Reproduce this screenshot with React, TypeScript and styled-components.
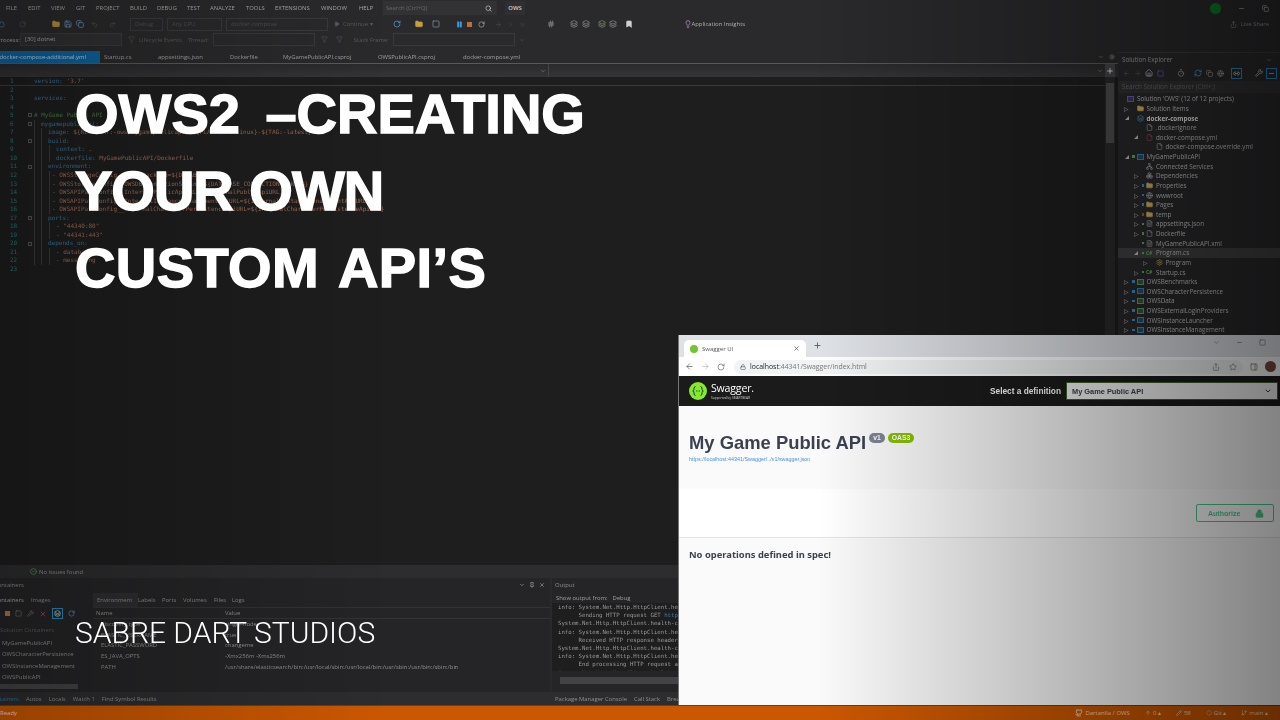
import React from "react";
import styled, { createGlobalStyle } from "styled-components";
import {
  ArrowLeft, ArrowRight, RotateCw, RotateCcw, Lock, Share, Star, PanelRight, X, Plus, Minus, Square, ChevronDown,
  Folder, File, FileText, Globe, Network, Boxes, Settings, Pin, Wrench, RefreshCw, Home, Play, Pause, Save,
  Search, Lightbulb, CheckCircle2, Github, GitBranch, Pencil, ArrowUp, Hash, Bookmark, Filter, Copy, Layers, Diamond,
  Link2, Undo2, Redo2, ChevronsRight, ChevronRight, Timer,
} from "lucide-react";

const GlobalStyle = createGlobalStyle`
  html, body { margin: 0; padding: 0; background: #1e1e1e; }
  * { box-sizing: border-box; }
`;

const Page = styled.div`
  position: relative;
  width: 1280px;
  height: 720px;
  overflow: hidden;
  display: flex;
  flex-direction: column;
  background: #2a2a2c;
  font-family: "Open Sans", "Liberation Sans", sans-serif;
  font-size: 5.9px;
  color: #a8a8a8;
`;

const Ide = styled.div`
  flex: 1;
  display: flex;
  flex-direction: column;
  min-height: 0;
  filter: blur(0.45px);
`;

const MenuBar = styled.div`
  height: 16px;
  display: flex;
  align-items: center;
  padding-left: 6px;
  color: #a8a8a8;
  flex: none;
`;

const MenuItem = styled.span<{ $w: number }>`
  width: ${(p) => p.$w}px;
  flex: none;
`;

const SearchBox = styled.div`
  width: 114px;
  height: 14px;
  margin-left: 5px;
  background: #323234;
  display: flex;
  align-items: center;
  justify-content: space-between;
  padding: 0 5px 0 3px;
  color: #6a6a6a;
`;

const SolutionName = styled.div`
  margin-left: 8px;
  width: 20px;
  height: 14px;
  background: #2f2f31;
  color: #d0d0d0;
  font-weight: 600;
  text-align: center;
  line-height: 14px;
`;

const WindowControls = styled.div`
  margin-left: auto;
  display: flex;
  align-items: center;
  gap: 17px;
  padding-right: 11px;
  color: #bbb;
`;

const UserBadge = styled.span`
  width: 11px;
  height: 11px;
  border-radius: 50%;
  background: #0f7a24;
`;

const ToolRow = styled.div`
  height: 16px;
  flex: none;
  display: flex;
  align-items: center;
  color: #565656;
`;

const ToolSlot = styled.div<{ $x?: number; $c?: string; $end?: boolean }>`
  margin-left: ${(p) => (p.$end ? "auto" : `${p.$x || 0}px`)};
  color: ${(p) => p.$c || "#5a5a5a"};
  display: flex;
  align-items: center;
  flex: none;
`;

const LastSlot = styled(ToolSlot)`
  margin-right: 11px;
`;

const ToolField = styled.div<{ $x: number; $w: number }>`
  margin-left: ${(p) => p.$x}px;
  width: ${(p) => p.$w}px;
  height: 13px;
  flex: none;
  border: 1px solid #3a3a3c;
  padding-left: 4px;
  line-height: 11px;
  color: #505050;
`;

const ProcessRow = styled(ToolRow)`
  height: 15px;
`;

const ProcessLabel = styled.span`
  margin-left: -3px;
  width: 23px;
  flex: none;
  color: #a8a8a8;
`;

const ProcessField = styled(ToolField)`
  color: #a8a8a8;
  background: #303032;
`;

const Workspace = styled.div`
  flex: 1;
  min-height: 0;
  display: flex;
`;

const EditorColumn = styled.div`
  width: 1118px;
  flex: none;
  display: flex;
  flex-direction: column;
`;

const TabStrip = styled.div`
  height: 17px;
  flex: none;
  padding-top: 4px;
  display: flex;
  align-items: stretch;
  border-bottom: 1px solid #1f6a9c;
  color: #a0a0a0;
`;

const ActiveTab = styled.div`
  width: 100px;
  flex: none;
  background: #0e639c;
  color: #b7d6ea;
  display: flex;
  justify-content: flex-end;
  align-items: center;
  gap: 6px;
  padding-right: 2px;
  white-space: nowrap;
  overflow: hidden;
`;

const DocTab = styled.div<{ $w: number }>`
  width: ${(p) => p.$w}px;
  flex: none;
  display: flex;
  align-items: center;
  white-space: nowrap;
`;

const TabExtras = styled.div`
  flex: 1;
  display: flex;
  justify-content: flex-end;
  align-items: center;
  gap: 5px;
  padding-right: 3px;
  color: #999;
`;

const NavBar = styled.div`
  height: 13px;
  flex: none;
  background: linear-gradient(#2a2a2c, #353537);
  display: flex;
  align-items: center;
  padding: 0 3px 0 540px;
  color: #999;
`;

const NavDivider = styled.div`
  width: 1px;
  height: 100%;
  margin-left: 2px;
  margin-right: auto;
  background: #444;
`;

const NavPlus = styled.span`
  display: flex;
  width: 10px;
  height: 100%;
  margin-left: 2px;
  align-items: center;
  justify-content: center;
  background: #47474a;
  color: #ddd;
`;

const EditorBody = styled.div`
  flex: 1;
  min-height: 0;
  display: flex;
  padding-right: 3px;
  background: #1e1e1e;
`;

const CodeArea = styled.div`
  flex: 1;
  font-family: "DejaVu Sans Mono", monospace;
  font-size: 6px;
  line-height: 8.55px;
  filter: brightness(1.15);
`;

const CodeLine = styled.div<{ $current?: boolean }>`
  height: 8.55px;
  display: flex;
  white-space: pre;
  border-bottom: ${(p) => (p.$current ? "1px solid #343436" : "none")};
`;

const LineNumber = styled.span`
  width: 28px;
  padding-left: 10px;
  flex: none;
  color: #1f6a6a;
`;

const FoldCell = styled.span`
  width: 6px;
  flex: none;
  display: flex;
  align-items: center;
`;

const FoldBox = styled.span`
  width: 4px;
  height: 4px;
  border: 1px solid #4a4a4a;
`;

const CodeText = styled.span<{ $indent: number }>`
  padding-left: ${(p) => p.$indent}px;
  color: #2f6384;
  background-image: repeating-linear-gradient(90deg, #333 0 1px, transparent 1px 7.3px);
  background-size: ${(p) => p.$indent}px 100%;
  background-repeat: no-repeat;
`;

const Str = styled.span`
  color: #8a5c48;
`;

const Comment = styled.span`
  color: #3f6b3a;
`;

const ScrollRail = styled.div`
  width: 10px;
  flex: none;
  background: #2a2a2c;
  display: flex;
  justify-content: center;
  padding-top: 6px;
`;

const ScrollThumb = styled.div`
  width: 8px;
  height: 60px;
  background: #4e4e50;
`;

const SolutionPanel = styled.div`
  flex: 1;
  display: flex;
  flex-direction: column;
  padding-top: 5px;
  min-width: 0;
  overflow: hidden;
  background: #2a2a2c;
  font-size: 6.3px;
  color: #c0c0c0;
`;

const PanelTitle = styled.div`
  height: 14px;
  flex: none;
  display: flex;
  align-items: center;
  justify-content: space-between;
  padding: 0 8px 0 4px;
  color: #a0a0a0;
  border-top: 1px solid #3a3a3a;
`;

const ExplorerTools = styled.div`
  height: 14px;
  flex: none;
  display: flex;
  align-items: center;
  padding-left: 5px;
`;

const ActiveTool = styled.span`
  display: inline-flex;
  padding: 1px;
  border: 1px solid #2a88c0;
  color: #cfe;
`;

const ExplorerSearch = styled.div`
  height: 12px;
  flex: none;
  margin-top: 1px;
  padding-left: 4px;
  line-height: 12px;
  color: #6a6a6a;
  background: #323234;
`;

const Tree = styled.div`
  padding-top: 1px;
`;

const TreeRow = styled.div<{ $depth: number; $selected?: boolean; $bold?: boolean }>`
  height: 9.63px;
  display: flex;
  align-items: center;
  padding-left: ${(p) => p.$depth * 9.5}px;
  white-space: nowrap;
  color: ${(p) => (p.$bold ? "#e8e8e8" : "#c0c0c0")};
  font-weight: ${(p) => (p.$bold ? 700 : 400)};
  background: ${(p) => (p.$selected ? "#414143" : "transparent")};
`;

const TreeCaret = styled.span`
  width: 8px;
  margin-left: -5px;
  flex: none;
  display: flex;
  justify-content: center;
  color: #c0c0c0;
`;

const TreeDot = styled.span`
  width: 6px;
  flex: none;
  display: flex;
  justify-content: center;
`;

const Dot = styled.span<{ $c: string }>`
  width: 2.5px;
  height: 2.5px;
  background: ${(p) => p.$c};
`;

const TreeIcon = styled.span`
  width: 7px;
  margin-right: 3px;
  flex: none;
  display: flex;
  align-items: center;
`;

const CsharpMark = styled.span`
  font-size: 5px;
  font-weight: 700;
  letter-spacing: -0.3px;
  color: #6fb05a;
`;

const OpenArrow = styled.span`
  width: 0;
  height: 0;
  border-left: 4px solid transparent;
  border-bottom: 4px solid #c0c0c0;
`;

const Swatch = styled.span<{ $c: string }>`
  width: 7px;
  height: 6px;
  flex: none;
  border: 1px solid ${(p) => p.$c};
  background: ${(p) => p.$c}55;
`;

const BottomArea = styled.div`
  height: 140px;
  flex: none;
  display: flex;
  flex-direction: column;
`;

const IssueBar = styled.div`
  height: 13px;
  flex: none;
  display: flex;
  align-items: center;
  gap: 2px;
  padding-left: 30px;
  background: #2d2d2f;
  color: #8f8f8f;
`;

const PanelsRow = styled.div`
  flex: 1;
  display: flex;
  gap: 2px;
  min-height: 0;
`;

const ContainersPanel = styled.div`
  width: 550px;
  flex: none;
  display: flex;
  flex-direction: column;
  background: #252527;
`;

const OutputPanel = styled.div`
  flex: 1;
  display: flex;
  flex-direction: column;
  background: #252527;
`;

const PanelHead = styled.div`
  height: 14px;
  flex: none;
  display: flex;
  align-items: center;
  padding-right: 5px;
  color: #8f8f8f;
  white-space: nowrap;
`;

const ClippedLabel = styled.span`
  margin-left: -6px;
  flex: 1;
`;

const OutputLabel = styled.span`
  margin-left: 3px;
`;

const HeadActions = styled.span`
  display: flex;
  gap: 4px;
  color: #bbb;
`;

const ContainersBody = styled.div`
  flex: 1;
  display: flex;
  min-height: 0;
`;

const ContainerList = styled.div`
  width: 78px;
  flex: none;
  display: flex;
  flex-direction: column;
  margin-right: 15px;
`;

const ListTabs = styled.div`
  height: 14px;
  margin-top: 1px;
  display: flex;
  gap: 7px;
  align-items: center;
`;

const ListTab = styled.span<{ $clip?: boolean }>`
  margin-left: ${(p) => (p.$clip ? "-6px" : "0")};
  color: ${(p) => (p.$clip ? "#a8a8a8" : "#8a8a8a")};
`;

const ListTools = styled.div`
  height: 13px;
  display: flex;
  align-items: center;
  gap: 5px;
  padding-left: 5px;
  color: #777;
`;

const Stop = styled.span`
  width: 5px;
  height: 5px;
  background: #b96f43;
`;

const ListGroup = styled.div`
  height: 13px;
  margin-top: 5px;
  line-height: 11px;
  color: #5a5a5a;
`;

const ListItem = styled.div`
  height: 11.4px;
  line-height: 11.4px;
  padding-left: 2px;
  color: #8f8f8f;
  white-space: nowrap;
`;

const HScroll = styled.div`
  margin-top: auto;
  height: 5px;
  margin-bottom: 3px;
  background: #434345;
`;

const Details = styled.div`
  flex: 1;
  display: flex;
  flex-direction: column;
  min-width: 0;
`;

const DetailTabs = styled.div`
  height: 14px;
  margin-top: 1px;
  display: flex;
  align-items: center;
  color: #8a8a8a;
`;

const DetailTab = styled.span<{ $on?: boolean; $w: number }>`
  width: ${(p) => p.$w}px;
  height: 100%;
  padding-left: ${(p) => (p.$on ? "4px" : "0")};
  line-height: 14px;
  background: ${(p) => (p.$on ? "#2e2e30" : "transparent")};
`;

const EnvRow = styled.div<{ $head?: boolean }>`
  height: ${(p) => (p.$head ? "12px" : "10.6px")};
  display: grid;
  grid-template-columns: 132px 1fr;
  align-items: center;
  white-space: nowrap;
  color: #929292;
  border-top: ${(p) => (p.$head ? "1px solid #333" : "none")};
  border-bottom: ${(p) => (p.$head ? "1px solid #333" : "none")};
`;

const EnvName = styled.span<{ $head?: boolean }>`
  padding-left: ${(p) => (p.$head ? "3px" : "8px")};
`;

const OutputFilter = styled.div`
  height: 11px;
  flex: none;
  display: flex;
  gap: 5px;
  align-items: center;
  padding-left: 4px;
  color: #a0a0a0;
  white-space: nowrap;
`;

const OutputText = styled.div`
  flex: 1;
  padding: 0 0 0 6px;
  overflow: hidden;
  font-family: "DejaVu Sans Mono", monospace;
  font-size: 5.7px;
  line-height: 8.2px;
  white-space: pre;
  color: #9a9a9a;
  background: #1e1e1e;
`;

const OutputLink = styled.span`
  color: #3f7fb0;
`;

const OutputScroll = styled.div`
  height: 7px;
  flex: none;
  margin: 6px 0 8px 8px;
  background: #434345;
`;

const PanelFooter = styled.div`
  height: 13px;
  flex: none;
  display: flex;
  align-items: center;
  background: #2d2d2f;
  color: #8f8f8f;
  white-space: nowrap;
  overflow: hidden;
`;

const FooterGroup = styled.div<{ $w?: number }>`
  width: ${(p) => (p.$w ? `${p.$w}px` : "auto")};
  display: flex;
  gap: 7px;
  flex: none;
`;

const FooterClip = styled.span`
  margin-left: -11px;
  color: #2a7ba8;
`;

const StatusBar = styled.div`
  height: 15px;
  flex: none;
  background: #ca5800;
  border-top: 1px solid #7a3a0a;
  display: flex;
  align-items: center;
  justify-content: space-between;
  padding: 0 12px 0 0;
  font-size: 6px;
  color: #f3d9c3;
`;

const StatusGroup = styled.div`
  display: flex;
  align-items: center;
  gap: 15px;
`;

const StatusItem = styled.span`
  display: inline-flex;
  align-items: center;
  gap: 2px;
`;

/* floating browser window */
const Browser = styled.div`
  position: absolute;
  left: 678px;
  top: 335px;
  width: 602px;
  height: 370px;
  display: flex;
  flex-direction: column;
  background: #fafafa;
  border-left: 1px solid #777;
  font-family: "Liberation Sans", sans-serif;
  filter: blur(0.35px);
`;

const ChromeTabs = styled.div`
  height: 22px;
  flex: none;
  display: flex;
  align-items: flex-end;
  padding-left: 5px;
  background: #dee1e6;
`;

const ChromeTab = styled.div`
  width: 122px;
  height: 17px;
  background: #fff;
  border-radius: 5px 5px 0 0;
  display: flex;
  align-items: center;
  padding: 0 6px;
  gap: 4px;
  font-family: "Open Sans", sans-serif;
  font-size: 6px;
  color: #555;
`;

const Favicon = styled.span`
  width: 8px;
  height: 8px;
  border-radius: 50%;
  background: #74c42f;
  flex: none;
`;

const TabTitle = styled.span`
  flex: 1;
`;

const NewTab = styled.span`
  margin: 0 0 2px 7px;
  color: #444;
  display: flex;
  align-self: center;
`;

const WindowButtons = styled.div`
  margin-left: auto;
  align-self: flex-start;
  padding-top: 4px;
  display: flex;
  gap: 16px;
  padding-right: 14px;
  color: #666;
`;

const AddressBar = styled.div`
  height: 19px;
  flex: none;
  display: flex;
  align-items: center;
  gap: 7px;
  padding: 0 4px 0 6px;
  background: #fff;
  color: #666;
`;

const Omnibox = styled.div`
  flex: 1;
  height: 14px;
  margin-left: 2px;
  border-radius: 7px;
  background: #f1f3f4;
  display: flex;
  align-items: center;
  gap: 4px;
  padding: 0 6px;
  font-family: "Open Sans", sans-serif;
  font-size: 6.9px;
  color: #777;
`;

const Host = styled.span`
  color: #222;
`;

const OmniEnd = styled.span`
  margin-left: auto;
  display: flex;
  gap: 9px;
`;

const Avatar = styled.span`
  width: 11px;
  height: 11px;
  border-radius: 50%;
  background: #7b4a3c;
`;

const SwaggerBar = styled.div`
  height: 30px;
  flex: none;
  background: #1b1b1b;
  display: flex;
  align-items: center;
  padding: 0 2px 0 10px;
  color: #fff;
`;

const Brand = styled.div`
  display: flex;
  flex-direction: column;
  margin-left: 4px;
  font-family: "Open Sans", sans-serif;
`;

const BrandName = styled.span`
  font-size: 10.6px;
  line-height: 14px;
  letter-spacing: -0.2px;
`;

const BrandSub = styled.span`
  margin-top: 1px;
  font-size: 3.2px;
  line-height: 5px;
  color: #ccc;
`;

const DefinitionLabel = styled.span`
  margin-left: auto;
  font-size: 8.3px;
  font-weight: 700;
  margin-right: 5px;
`;

const DefinitionSelect = styled.div`
  width: 212px;
  height: 18px;
  border: 1.5px solid #41622c;
  background: #f7f7f7;
  display: flex;
  align-items: center;
  justify-content: space-between;
  padding: 0 5px;
  font-size: 7.4px;
  font-weight: 700;
  color: #3b4151;
`;

const InfoBlock = styled.div`
  height: 83px;
  flex: none;
  padding: 26px 0 0 10px;
  background: #fafafa;
`;

const TitleRow = styled.div`
  display: flex;
  align-items: flex-start;
`;

const ApiTitle = styled.h2`
  margin: 0;
  font-size: 18.4px;
  line-height: 22px;
  font-weight: 700;
  color: #3b4151;
`;

const Badge = styled.span<{ $c: string }>`
  margin: 1px 0 0 3px;
  padding: 0 4px;
  height: 10px;
  line-height: 10px;
  border-radius: 5px;
  background: ${(p) => p.$c};
  color: #fff;
  font-size: 6.8px;
  font-weight: 700;
`;

const SpecLink = styled.div`
  font-size: 5.4px;
  color: #4990e2;
  margin-top: 2px;
`;

const AuthBand = styled.div`
  height: 49px;
  flex: none;
  background: #fff;
  border-bottom: 1px solid #e4e4e4;
  display: flex;
  align-items: center;
  justify-content: flex-end;
  padding: 0 6px 0 0;
`;

const AuthButton = styled.div`
  width: 78px;
  height: 18px;
  border: 1.5px solid #49cc90;
  border-radius: 2px;
  display: flex;
  align-items: center;
  justify-content: space-between;
  padding: 0 9px 0 11px;
  color: #49cc90;
  font-size: 7px;
  font-weight: 700;
`;

const EmptyNote = styled.div`
  padding: 10px 0 0 10px;
  font-family: "Noto Sans", sans-serif;
  font-size: 9.4px;
  font-weight: 700;
  color: #3b4151;
`;

const Vignette = styled.div`
  position: absolute;
  inset: 0;
  pointer-events: none;
  background: linear-gradient(90deg, rgba(0, 0, 0, 0.25) 0, rgba(0, 0, 0, 0) 30%, rgba(0, 0, 0, 0) 64%, rgba(0, 0, 0, 0.48) 100%);
`;

const Headline = styled.h1`
  position: absolute;
  left: 75px;
  top: 75px;
  margin: 0;
  font-family: "Liberation Sans", sans-serif;
  font-size: 56px;
  line-height: 77px;
  font-weight: 700;
  color: #fff;
  -webkit-text-stroke: 1.4px #fff;
`;

const HeadLine = styled.span<{ $gap: number; $track?: number }>`
  display: block;
  white-space: pre;
  word-spacing: ${(p) => p.$gap}px;
  letter-spacing: ${(p) => p.$track || 0}px;
`;

const Studio = styled.div`
  position: absolute;
  left: 75px;
  top: 615px;
  font-family: "Roboto", "Liberation Sans", sans-serif;
  font-size: 30px;
  font-weight: 300;
  line-height: 36px;
  color: #fff;
  white-space: nowrap;
`;

const menu: [string, number][] = [
  ["FILE", 22], ["EDIT", 23], ["VIEW", 25], ["GIT", 20], ["PROJECT", 34], ["BUILD", 27], ["DEBUG", 30],
  ["TEST", 23], ["ANALYZE", 36], ["TOOLS", 29], ["EXTENSIONS", 46], ["WINDOW", 38], ["HELP", 19],
];

const tabs: [string, number][] = [
  ["Startup.cs", 54], ["appsettings.json", 72], ["Dockerfile", 53], ["MyGamePublicAPI.csproj", 95],
  ["OWSPublicAPI.csproj", 85], ["docker-compose.yml", 90],
];

type Code = { n: number; i?: number; t?: React.ReactNode; current?: boolean; fold?: boolean };
const code: Code[] = [
  { n: 1, t: <>version: <Str>'3.7'</Str></>, current: true },
  { n: 2 },
  { n: 3, t: "services:" },
  { n: 4 },
  { n: 5, t: <Comment># MyGame Public API</Comment>, fold: true },
  { n: 6, i: 7, t: "mygamepublicapi:", fold: true },
  { n: 7, i: 14, t: <>image: <Str>{"${REGISTRY:-ows/mygamepublicapi}:${PLATFORM:-linux}-${TAG:-latest}"}</Str></> },
  { n: 8, i: 14, t: "build:", fold: true },
  { n: 9, i: 22, t: <>context: <Str>.</Str></> },
  { n: 10, i: 22, t: <>dockerfile: <Str>MyGamePublicAPI/Dockerfile</Str></> },
  { n: 11, i: 14, t: "environment:", fold: true },
  { n: 12, i: 18, t: <Str>{"- OWSStorageConfig__OWSDBBackend=${DATABASE}"}</Str> },
  { n: 13, i: 18, t: <Str>{"- OWSStorageConfig__OWSDBConnectionString=${DATABASE_CONNECTION_STRING}"}</Str> },
  { n: 14, i: 18, t: <Str>{"- OWSAPIPathConfig__InternalPublicApiURL=${InternalPublicApiURL}"}</Str> },
  { n: 15, i: 18, t: <Str>{"- OWSAPIPathConfig__InternalInstanceManagementApiURL=${InternalInstanceManagementApiURL}"}</Str> },
  { n: 16, i: 18, t: <Str>{"- OWSAPIPathConfig__InternalCharacterPersistenceApiURL=${InternalCharacterPersistenceApiURL}"}</Str> },
  { n: 17, i: 14, t: "ports:", fold: true },
  { n: 18, i: 22, t: <Str>- "44340:80"</Str> },
  { n: 19, i: 22, t: <Str>- "44341:443"</Str> },
  { n: 20, i: 14, t: "depends_on:", fold: true },
  { n: 21, i: 22, t: <Str>- database</Str> },
  { n: 22, i: 22, t: <Str>- messaging</Str> },
  { n: 23 },
];

type Node = {
  d: number;
  label: string;
  caret?: "open" | "closed";
  dot?: string;
  icon: React.ReactNode;
  bold?: boolean;
  sel?: boolean;
};
const BLUE = "#3f8fd0";
const GREEN = "#5fae5f";
const RED = "#c0503a";
const folder = <Folder size={7} color="#d6b464" fill="#d6b464" />;
const fileIcon = <File size={7} color="#b0b0b0" />;
const textIcon = <FileText size={7} color="#b0b0b0" />;
const csIcon = <CsharpMark>C#</CsharpMark>;
const blueBox = <Swatch $c="#2f8fc8" />;
const greenBox = <Swatch $c="#5aa35a" />;
const tree: Node[] = [
  { d: 0, label: "Solution 'OWS' (12 of 12 projects)", icon: <Swatch $c="#6a5acd" /> },
  { d: 1, label: "Solution Items", caret: "closed", icon: folder },
  { d: 1, label: "docker-compose", caret: "open", icon: <Layers size={7} color="#5aa6d6" />, bold: true },
  { d: 2, label: ".dockerignore", icon: fileIcon },
  { d: 2, label: "docker-compose.yml", caret: "open", icon: <File size={7} color="#b0505f" /> },
  { d: 3, label: "docker-compose.override.yml", icon: fileIcon },
  { d: 1, label: "MyGamePublicAPI", caret: "open", dot: GREEN, icon: blueBox },
  { d: 2, label: "Connected Services", icon: <Network size={7} color="#b0b0b0" /> },
  { d: 2, label: "Dependencies", caret: "closed", icon: <Boxes size={7} color="#b0b0b0" /> },
  { d: 2, label: "Properties", caret: "closed", dot: BLUE, icon: folder },
  { d: 2, label: "wwwroot", caret: "closed", dot: BLUE, icon: <Globe size={7} color="#c0c0c0" /> },
  { d: 2, label: "Pages", caret: "closed", dot: BLUE, icon: folder },
  { d: 2, label: "temp", caret: "closed", dot: RED, icon: folder },
  { d: 2, label: "appsettings.json", caret: "closed", dot: GREEN, icon: textIcon },
  { d: 2, label: "Dockerfile", caret: "closed", dot: GREEN, icon: fileIcon },
  { d: 2, label: "MyGamePublicAPI.xml", dot: GREEN, icon: textIcon },
  { d: 2, label: "Program.cs", caret: "open", dot: GREEN, icon: csIcon, sel: true },
  { d: 3, label: "Program", caret: "closed", icon: <Settings size={7} color="#d6b464" /> },
  { d: 2, label: "Startup.cs", caret: "closed", dot: GREEN, icon: csIcon },
  { d: 1, label: "OWSBenchmarks", caret: "closed", dot: BLUE, icon: greenBox },
  { d: 1, label: "OWSCharacterPersistence", caret: "closed", dot: BLUE, icon: blueBox },
  { d: 1, label: "OWSData", caret: "closed", dot: BLUE, icon: greenBox },
  { d: 1, label: "OWSExternalLoginProviders", caret: "closed", dot: BLUE, icon: greenBox },
  { d: 1, label: "OWSInstanceLauncher", caret: "closed", dot: BLUE, icon: blueBox },
  { d: 1, label: "OWSInstanceManagement", caret: "closed", dot: BLUE, icon: blueBox },
];

const env: [string, string][] = [
  ["discovery.type", "single-node"],
  ["ELASTIC_USERNAME", "true"],
  ["ELASTIC_PASSWORD", "changeme"],
  ["ES_JAVA_OPTS", "-Xmx256m -Xms256m"],
  ["PATH", "/usr/share/elasticsearch/bin:/usr/local/sbin:/usr/local/bin:/usr/sbin:/usr/bin:/sbin:/bin"],
];

const detailTabs: [string, number][] = [
  ["Environment", 45], ["Labels", 24], ["Ports", 21], ["Volumes", 31], ["Files", 18], ["Logs", 20],
];

export default function App() {
  return (
    <Page>
      <GlobalStyle />
      <Ide>
        <MenuBar>
          {menu.map(([label, w]) => (
            <MenuItem key={label} $w={w}>{label}</MenuItem>
          ))}
          <SearchBox>
            Search (Ctrl+Q)
            <Search size={7} color="#ddd" />
          </SearchBox>
          <SolutionName>OWS</SolutionName>
          <WindowControls>
            <UserBadge />
            <Minus size={7} />
            <Copy size={7} />
          </WindowControls>
        </MenuBar>
        <ToolRow>
          <ToolSlot $x={-2} $c="#3f8fc8"><RotateCcw size={7} /></ToolSlot>
          <ToolSlot $x={14}><RotateCw size={7} /></ToolSlot>
          <ToolSlot $x={26} $c="#b88f3c"><Folder size={8} fill="#b88f3c" /></ToolSlot>
          <ToolSlot $x={4} $c="#6f9fc8"><Save size={8} /></ToolSlot>
          <ToolSlot $x={4} $c="#6f9fc8"><Copy size={8} /></ToolSlot>
          <ToolSlot $x={7}><Undo2 size={7} /></ToolSlot>
          <ToolSlot $x={11}><Redo2 size={7} /></ToolSlot>
          <ToolField $x={14} $w={33}>Debug</ToolField>
          <ToolField $x={4} $w={55}>Any CPU</ToolField>
          <ToolField $x={4} $w={102}>docker-compose</ToolField>
          <ToolSlot $x={6}><Play size={6} fill="currentColor" /></ToolSlot>
          <ToolSlot $x={3}>Continue ▾</ToolSlot>
          <ToolSlot $x={20} $c="#5aa3dc"><RotateCw size={8} /></ToolSlot>
          <ToolSlot $x={14} $c="#c89f3c"><Folder size={8} fill="#c89f3c" /></ToolSlot>
          <ToolSlot $x={9} $c="#8a9aaa"><Square size={8} /></ToolSlot>
          <ToolSlot $x={16} $c="#3f9fe8"><Pause size={7} fill="#3f9fe8" /></ToolSlot>
          <ToolSlot $x={4}><Stop /></ToolSlot>
          <ToolSlot $x={6} $c="#c0c0c0"><RotateCw size={7} /></ToolSlot>
          <ToolSlot $x={10} $c="#4a4a4a"><ArrowRight size={7} /></ToolSlot>
          <ToolSlot $x={5} $c="#4a4a4a"><ChevronRight size={7} /></ToolSlot>
          <ToolSlot $x={5} $c="#4a4a4a"><ChevronsRight size={7} /></ToolSlot>
          <ToolSlot $x={21} $c="#a0a0a0"><Hash size={8} /></ToolSlot>
          <ToolSlot $x={15} $c="#9a9a9a"><Layers size={8} /></ToolSlot>
          <ToolSlot $x={4} $c="#9a9a9a"><Layers size={8} /></ToolSlot>
          <ToolSlot $x={8} $c="#8a9a7a"><Layers size={8} /></ToolSlot>
          <ToolSlot $x={3} $c="#9a9a9a"><Layers size={8} /></ToolSlot>
          <ToolSlot $x={8} $c="#d0d0d0"><Bookmark size={8} fill="#d0d0d0" /></ToolSlot>
          <ToolSlot $x={51} $c="#c99ae8"><Lightbulb size={8} /></ToolSlot>
          <ToolSlot $c="#b0b0b0">Application Insights</ToolSlot>
          <ToolSlot $end $c="#8a8a8a"><Share size={7} /></ToolSlot>
          <LastSlot $x={4} $c="#8a8a8a">Live Share</LastSlot>
        </ToolRow>
        <ProcessRow>
          <ProcessLabel>Process:</ProcessLabel>
          <ProcessField $x={0} $w={102}>[30] dotnet</ProcessField>
          <ToolSlot $x={6}><Filter size={7} /></ToolSlot>
          <ToolSlot $x={4}>Lifecycle Events</ToolSlot>
          <ToolSlot $x={6}>Thread:</ToolSlot>
          <ToolField $x={4} $w={102}> </ToolField>
          <ToolSlot $x={6}><Filter size={7} /></ToolSlot>
          <ToolSlot $x={8}><Filter size={7} /></ToolSlot>
          <ToolSlot $x={11}>Stack Frame:</ToolSlot>
          <ToolField $x={4} $w={122}> </ToolField>
          <ToolSlot $x={4}><ChevronDown size={6} /></ToolSlot>
        </ProcessRow>
        <Workspace>
          <EditorColumn>
            <TabStrip>
              <ActiveTab>
                docker-compose-additional.yml
                <Pin size={5} />
                <X size={6} />
              </ActiveTab>
              <DocTab $w={4} />
              {tabs.map(([label, w]) => (
                <DocTab key={label} $w={w}>{label}</DocTab>
              ))}
              <TabExtras>
                <ChevronDown size={6} />
                <Settings size={6} />
              </TabExtras>
            </TabStrip>
            <NavBar>
              <ChevronDown size={6} />
              <NavDivider />
              <ChevronDown size={6} />
              <NavPlus><Plus size={8} strokeWidth={3} /></NavPlus>
            </NavBar>
            <EditorBody>
              <CodeArea>
                {code.map((l) => (
                  <CodeLine key={l.n} $current={l.current}>
                    <LineNumber>{l.n}</LineNumber>
                    <FoldCell>{l.fold && <FoldBox />}</FoldCell>
                    <CodeText $indent={l.i || 0}>{l.t}</CodeText>
                  </CodeLine>
                ))}
              </CodeArea>
              <ScrollRail><ScrollThumb /></ScrollRail>
            </EditorBody>
          </EditorColumn>
          <SolutionPanel>
            <PanelTitle>Solution Explorer<ChevronDown size={6} /></PanelTitle>
            <ExplorerTools>
              <ToolSlot $c="#5a5a5a"><ArrowLeft size={7} /></ToolSlot>
              <ToolSlot $x={4} $c="#5a5a5a"><ArrowRight size={7} /></ToolSlot>
              <ToolSlot $x={4} $c="#c8c8c8"><Home size={8} /></ToolSlot>
              <ToolSlot $x={4} $c="#7a6add"><Square size={7} /></ToolSlot>
              <ToolSlot $x={13} $c="#a8a8a8"><Timer size={8} /></ToolSlot>
              <ToolSlot $x={9} $c="#4f9fe0"><RefreshCw size={8} /></ToolSlot>
              <ToolSlot $x={4} $c="#a8a8a8"><Copy size={7} /></ToolSlot>
              <ToolSlot $x={4} $c="#a8a8a8"><Globe size={7} /></ToolSlot>
              <ToolSlot $x={7} $c="#cfe"><ActiveTool><Link2 size={7} /></ActiveTool></ToolSlot>
              <ToolSlot $x={13} $c="#c8c8c8"><Wrench size={8} /></ToolSlot>
              <ToolSlot $x={3} $c="#cfe"><ActiveTool><Minus size={7} /></ActiveTool></ToolSlot>
            </ExplorerTools>
            <ExplorerSearch>Search Solution Explorer (Ctrl+;)</ExplorerSearch>
            <Tree>
              {tree.map((n) => (
                <TreeRow key={n.label} $depth={n.d} $selected={n.sel} $bold={n.bold}>
                  <TreeCaret>
                    {n.caret === "open" && <OpenArrow />}
                    {n.caret === "closed" && "▷"}
                  </TreeCaret>
                  <TreeDot>{n.dot && <Dot $c={n.dot} />}</TreeDot>
                  <TreeIcon>{n.icon}</TreeIcon>
                  <span>{n.label}</span>
                </TreeRow>
              ))}
            </Tree>
          </SolutionPanel>
        </Workspace>
        <BottomArea>
          <IssueBar><CheckCircle2 size={7} color="#4caf50" /> No issues found</IssueBar>
          <PanelsRow>
            <ContainersPanel>
              <PanelHead>
                <ClippedLabel>Containers</ClippedLabel>
                <HeadActions>
                  <ChevronDown size={6} />
                  <Pin size={6} />
                  <X size={6} />
                </HeadActions>
              </PanelHead>
              <ContainersBody>
                <ContainerList>
                  <ListTabs>
                    <ListTab $clip>Containers</ListTab>
                    <ListTab>Images</ListTab>
                  </ListTabs>
                  <ListTools>
                    <Stop />
                    <Square size={7} />
                    <Wrench size={7} />
                    <X size={8} color="#c0504d" />
                    <ActiveTool><Layers size={7} /></ActiveTool>
                    <RotateCw size={7} color="#6f9fc8" />
                  </ListTools>
                  <ListGroup>Solution Containers</ListGroup>
                  <ListItem>MyGamePublicAPI</ListItem>
                  <ListItem>OWSCharacterPersistence</ListItem>
                  <ListItem>OWSInstanceManagement</ListItem>
                  <ListItem>OWSPublicAPI</ListItem>
                  <HScroll />
                </ContainerList>
                <Details>
                  <DetailTabs>
                    {detailTabs.map(([label, w]) => (
                      <DetailTab key={label} $w={w} $on={label === "Environment"}>{label}</DetailTab>
                    ))}
                  </DetailTabs>
                  <EnvRow $head>
                    <EnvName $head>Name</EnvName>
                    <span>Value</span>
                  </EnvRow>
                  {env.map(([k, v]) => (
                    <EnvRow key={k}>
                      <EnvName>{k}</EnvName>
                      <span>{v}</span>
                    </EnvRow>
                  ))}
                </Details>
              </ContainersBody>
            </ContainersPanel>
            <OutputPanel>
              <PanelHead><OutputLabel>Output</OutputLabel></PanelHead>
              <OutputFilter>Show output from: <span>Debug</span></OutputFilter>
              <OutputText>
                {"info: System.Net.Http.HttpClient.health-c\n      Sending HTTP request GET "}
                <OutputLink>https://</OutputLink>
                {"\nSystem.Net.Http.HttpClient.health-c\ninfo: System.Net.Http.HttpClient.health-c\n      Received HTTP response headers\nSystem.Net.Http.HttpClient.health-c\ninfo: System.Net.Http.HttpClient.health-c\n      End processing HTTP request a\nSystem.Net.Http.HttpClient.health-c"}
              </OutputText>
              <OutputScroll />
            </OutputPanel>
          </PanelsRow>
          <PanelFooter>
            <FooterGroup $w={555}>
              <FooterClip>Containers</FooterClip>
              <span>Autos</span>
              <span>Locals</span>
              <span>Watch 1</span>
              <span>Find Symbol Results</span>
            </FooterGroup>
            <FooterGroup>
              <span>Package Manager Console</span>
              <span>Call Stack</span>
              <span>Breakpoints</span>
            </FooterGroup>
          </PanelFooter>
        </BottomArea>
        <StatusBar>
          <span>Ready</span>
          <StatusGroup>
            <StatusItem><Github size={8} color="#fff" /> Dartanlla / OWS</StatusItem>
            <StatusItem><ArrowUp size={6} /> 0 ▴</StatusItem>
            <StatusItem><Pencil size={6} /> 58</StatusItem>
            <StatusItem><Diamond size={6} /> Git ▴</StatusItem>
            <StatusItem><GitBranch size={6} /> main ▴</StatusItem>
          </StatusGroup>
        </StatusBar>
      </Ide>
      <Browser>
        <ChromeTabs>
          <ChromeTab>
            <Favicon />
            <TabTitle>Swagger UI</TabTitle>
            <X size={7} color="#333" />
          </ChromeTab>
          <NewTab><Plus size={9} /></NewTab>
          <WindowButtons>
            <ChevronDown size={7} />
            <Minus size={7} />
            <Square size={7} />
          </WindowButtons>
        </ChromeTabs>
        <AddressBar>
          <ArrowLeft size={9} />
          <ArrowRight size={9} color="#bbb" />
          <RotateCw size={8} />
          <Omnibox>
            <Lock size={6} color="#444" />
            <span><Host>localhost</Host>:44341/Swagger/index.html</span>
            <OmniEnd>
              <Share size={8} />
              <Star size={8} />
            </OmniEnd>
          </Omnibox>
          <PanelRight size={8} />
          <Avatar />
        </AddressBar>
        <SwaggerBar>
          <svg width="18" height="18" viewBox="0 0 18 18">
            <circle cx="9" cy="9" r="9" fill="#85ea2d" />
            <path d="M6.5 4.5c-2 0-1.2 3-1.8 4-.3.4-.7.5-1 .5.3 0 .7.1 1 .5.6 1-.2 4 1.8 4M11.5 4.5c2 0 1.2 3 1.8 4 .3.4.7.5 1 .5-.3 0-.7.1-1 .5-.6 1 .2 4-1.8 4" fill="none" stroke="#173647" strokeWidth="1" />
            <path d="M7 9h.8M8.6 9h.8M10.2 9h.8" stroke="#173647" strokeWidth="1" />
          </svg>
          <Brand>
            <BrandName>Swagger.</BrandName>
            <BrandSub>Supported by SMARTBEAR</BrandSub>
          </Brand>
          <DefinitionLabel>Select a definition</DefinitionLabel>
          <DefinitionSelect>
            My Game Public API
            <ChevronDown size={8} strokeWidth={3} />
          </DefinitionSelect>
        </SwaggerBar>
        <InfoBlock>
          <TitleRow>
            <ApiTitle>My Game Public API</ApiTitle>
            <Badge $c="#7d8492">v1</Badge>
            <Badge $c="#89bf04">OAS3</Badge>
          </TitleRow>
          <SpecLink>https://localhost:44341/Swagger/../v1/swagger.json</SpecLink>
        </InfoBlock>
        <AuthBand>
          <AuthButton>
            Authorize
            <Lock size={9} fill="#49cc90" />
          </AuthButton>
        </AuthBand>
        <EmptyNote>No operations defined in spec!</EmptyNote>
      </Browser>
      <Vignette />
      <Headline>
        <HeadLine $gap={10}>OWS2 –CREATING</HeadLine>
        <HeadLine $gap={2} $track={-1}>YOUR OWN</HeadLine>
        <HeadLine $gap={5} $track={0.4}>CUSTOM API’S</HeadLine>
      </Headline>
      <Studio>SABRE DART STUDIOS</Studio>
    </Page>
  );
}
